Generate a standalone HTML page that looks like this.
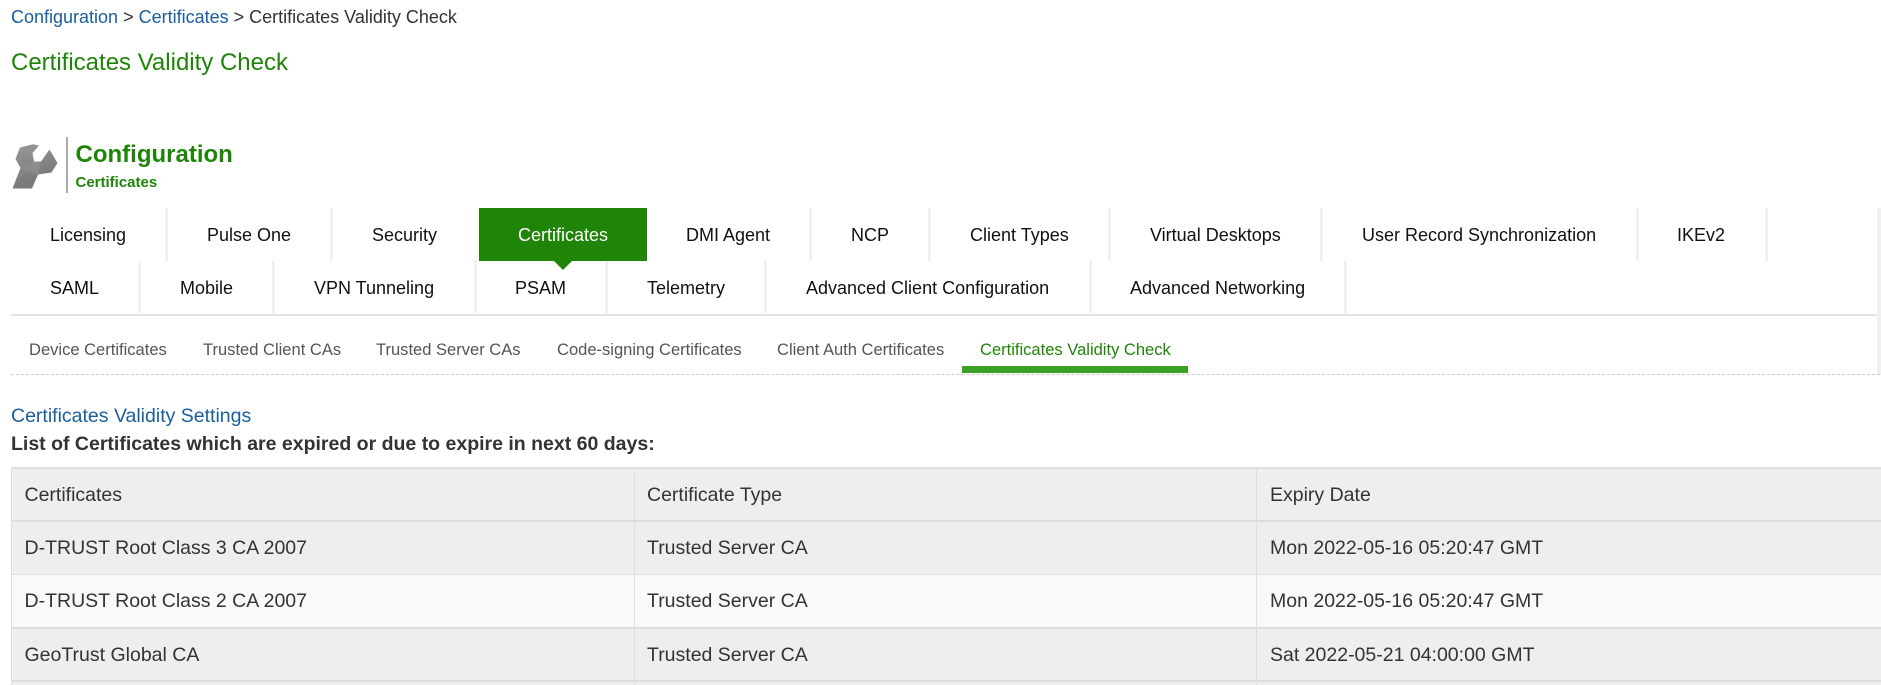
<!DOCTYPE html>
<html><head><meta charset="utf-8"><title>Certificates Validity Check</title>
<style>
html,body{margin:0;padding:0;background:#fff;width:1881px;height:685px;overflow:hidden}
body{position:relative;font-family:"Liberation Sans",Arial,sans-serif;color:#333}
.t{position:absolute;white-space:nowrap;line-height:20px;height:20px}
.tab{font-size:18px;color:#111}
.sub{font-size:16.55px;color:#555}
.cell{font-size:19.5px;color:#333}
.s{position:absolute;width:3px;background:#f0f0f0}
.h{position:absolute;background:#ddd}
a{color:#1a5e9f;text-decoration:none}
</style></head><body>
<div class="t" style="left:11px;top:7px;font-size:18px"><a href="#">Configuration</a> &gt; <a href="#">Certificates</a> &gt; Certificates Validity Check</div>
<div class="t" style="left:11px;top:53px;font-size:24px;color:#1f8508">Certificates Validity Check</div>

<svg style="position:absolute;left:10px;top:142px" width="50" height="50" viewBox="10 142 50 50">
<defs><linearGradient id="g" x1="0" y1="0" x2="0.4" y2="1"><stop offset="0" stop-color="#999"/><stop offset="1" stop-color="#757575"/></linearGradient><filter id="b"><feGaussianBlur stdDeviation="0.3"/></filter></defs>
<g filter="url(#b)">
<path d="M12.5 188.5L20.5 168 15.5 159 20 147.5 33 144.3 39 145.5 32.5 153 34 161.5 41 161.5 49.5 149.5 57.5 163 51.5 172.5 38 174.5 32 188.5Z" fill="url(#g)"/>
<path d="M20.5 168L34 161.5 41 161.5 38 174.5 28 171Z" fill="#8c8c8c"/>
</g>
</svg>
<div style="position:absolute;left:66px;top:137px;width:2px;height:56px;background:#aaa"></div>
<div class="t" style="left:75.5px;top:145px;font-size:24px;font-weight:bold;color:#1f8508">Configuration</div>
<div class="t" style="left:75.5px;top:173px;font-size:15px;font-weight:bold;color:#1f8508">Certificates</div>

<!-- tabs row 1 -->
<div style="position:absolute;left:479px;top:208px;width:168px;height:53px;background:#1f8508"></div>
<div style="position:absolute;left:554px;top:261px;width:0;height:0;border-left:9px solid transparent;border-right:9px solid transparent;border-top:9px solid #1f8508;z-index:2"></div>
<div class="s" style="left:165px;top:208px;height:53px"></div>
<div class="s" style="left:330px;top:208px;height:53px"></div>
<div class="s" style="left:809px;top:208px;height:53px"></div>
<div class="s" style="left:928px;top:208px;height:53px"></div>
<div class="s" style="left:1108px;top:208px;height:53px"></div>
<div class="s" style="left:1320px;top:208px;height:53px"></div>
<div class="s" style="left:1636px;top:208px;height:53px"></div>
<div class="s" style="left:1765px;top:208px;height:53px"></div>
<div class="t tab" style="left:50px;top:225px">Licensing</div>
<div class="t tab" style="left:207px;top:225px">Pulse One</div>
<div class="t tab" style="left:372px;top:225px">Security</div>
<div class="t tab" style="left:518px;top:225px;color:#fff">Certificates</div>
<div class="t tab" style="left:686px;top:225px">DMI Agent</div>
<div class="t tab" style="left:851px;top:225px">NCP</div>
<div class="t tab" style="left:970px;top:225px">Client Types</div>
<div class="t tab" style="left:1150px;top:225px">Virtual Desktops</div>
<div class="t tab" style="left:1362px;top:225px">User Record Synchronization</div>
<div class="t tab" style="left:1677px;top:225px">IKEv2</div>
<!-- tabs row 2 -->
<div class="s" style="left:138px;top:261px;height:52px"></div>
<div class="s" style="left:272px;top:261px;height:52px"></div>
<div class="s" style="left:474px;top:261px;height:52px"></div>
<div class="s" style="left:605px;top:261px;height:52px"></div>
<div class="s" style="left:764px;top:261px;height:52px"></div>
<div class="s" style="left:1089px;top:261px;height:52px"></div>
<div class="s" style="left:1344px;top:261px;height:52px"></div>
<div class="t tab" style="left:50px;top:278px">SAML</div>
<div class="t tab" style="left:180px;top:278px">Mobile</div>
<div class="t tab" style="left:314px;top:278px">VPN Tunneling</div>
<div class="t tab" style="left:515px;top:278px">PSAM</div>
<div class="t tab" style="left:647px;top:278px">Telemetry</div>
<div class="t tab" style="left:806px;top:278px">Advanced Client Configuration</div>
<div class="t tab" style="left:1130px;top:278px">Advanced Networking</div>
<div class="h" style="left:11px;top:314px;width:1866px;height:2px;background:#e2e2e2"></div>
<div style="position:absolute;left:1877px;top:208px;width:4px;height:167px;background:#f0f0f0"></div>

<!-- sub tabs -->
<div class="t sub" style="left:29px;top:340px">Device Certificates</div>
<div class="t sub" style="left:203px;top:340px">Trusted Client CAs</div>
<div class="t sub" style="left:376px;top:340px">Trusted Server CAs</div>
<div class="t sub" style="left:557px;top:340px">Code-signing Certificates</div>
<div class="t sub" style="left:777px;top:340px">Client Auth Certificates</div>
<div class="t sub" style="left:980px;top:340px;color:#1f8508">Certificates Validity Check</div>
<div style="position:absolute;left:962px;top:366px;width:226px;height:7px;background:#3ca026"></div>
<div style="position:absolute;left:11px;top:374px;width:1869px;border-top:1px dashed #ccc"></div>

<div class="t" style="left:11px;top:406px;font-size:19.5px"><a href="#">Certificates Validity Settings</a></div>
<div class="t" style="left:11px;top:434px;font-size:19.5px;font-weight:bold">List of Certificates which are expired or due to expire in next 60 days:</div>

<!-- table -->
<div style="position:absolute;left:11px;top:467px;width:1870px;height:218px;background:#eee"></div>
<div style="position:absolute;left:11px;top:575px;width:1870px;height:53px;background:#f9f9f9"></div>
<div class="h" style="left:11px;top:467px;width:1870px;height:2px"></div>
<div class="h" style="left:11px;top:520px;width:1870px;height:2px"></div>
<div class="h" style="left:11px;top:574px;width:1870px;height:1px"></div>
<div class="h" style="left:11px;top:627px;width:1870px;height:2px"></div>
<div class="h" style="left:11px;top:680px;width:1870px;height:2px"></div>
<div class="h" style="left:11px;top:467px;width:1px;height:218px"></div>
<div class="h" style="left:634px;top:467px;width:1px;height:218px"></div>
<div class="h" style="left:1256px;top:467px;width:1px;height:218px"></div>
<div class="t cell" style="left:24.5px;top:485px">Certificates</div>
<div class="t cell" style="left:647px;top:485px">Certificate Type</div>
<div class="t cell" style="left:1270px;top:485px">Expiry Date</div>
<div class="t cell" style="left:24.5px;top:538px">D-TRUST Root Class 3 CA 2007</div>
<div class="t cell" style="left:647px;top:538px">Trusted Server CA</div>
<div class="t cell" style="left:1270px;top:538px">Mon 2022-05-16 05:20:47 GMT</div>
<div class="t cell" style="left:24.5px;top:591px">D-TRUST Root Class 2 CA 2007</div>
<div class="t cell" style="left:647px;top:591px">Trusted Server CA</div>
<div class="t cell" style="left:1270px;top:591px">Mon 2022-05-16 05:20:47 GMT</div>
<div class="t cell" style="left:24.5px;top:645px">GeoTrust Global CA</div>
<div class="t cell" style="left:647px;top:645px">Trusted Server CA</div>
<div class="t cell" style="left:1270px;top:645px">Sat 2022-05-21 04:00:00 GMT</div>
</body></html>
